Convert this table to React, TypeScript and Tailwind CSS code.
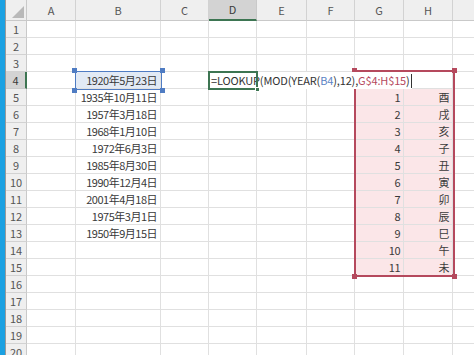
const COL_WIDTHS = [49, 85, 48, 48, 50, 48, 49, 49, 40];
const LETTERS = ["A", "B", "C", "D", "E", "F", "G", "H", "I"];
const ROW_COUNT = 20;

const dates: Record<number, string> = {
  4: "1920年5月23日",
  5: "1935年10月11日",
  6: "1957年3月18日",
  7: "1968年1月10日",
  8: "1972年6月3日",
  9: "1985年8月30日",
  10: "1990年12月4日",
  11: "2001年4月18日",
  12: "1975年3月1日",
  13: "1950年9月15日",
};

const zodiac = ["酉", "戌", "亥", "子", "丑", "寅", "卯", "辰", "巳", "午", "未"];

const font = { fontFamily: '"Noto Sans CJK JP", "Noto Sans", sans-serif' };

function Corner() {
  return (
    <div className="flex items-end justify-end border-r border-b border-[#c9c9c9] bg-[#efefef] p-[2px]">
      <svg width="12" height="12" viewBox="0 0 12 12">
        <polygon points="12,0 12,12 0,12" fill="#b9b9b9" />
      </svg>
    </div>
  );
}

function ColHeader({ letter }: { letter: string }) {
  const active = letter === "D";
  return (
    <div
      className={
        active
          ? "flex items-center justify-center border-r border-[#c9c9c9] border-b-2 border-b-[#3d7552] bg-[#d3d3d3] text-[11px] text-[#3a3a3a]"
          : "flex items-center justify-center border-r border-b border-[#d2d2d2] border-b-[#c9c9c9] bg-[#efefef] text-[11px] text-[#555]"
      }
    >
      {letter === "I" ? "" : letter}
    </div>
  );
}

function RowHeader({ row }: { row: number }) {
  const active = row === 4;
  return (
    <div
      className={
        active
          ? "flex items-center justify-center border-b border-[#c9c9c9] border-r-2 border-r-[#3d7552] bg-[#d3d3d3] text-[11px] text-[#3a3a3a]"
          : "flex items-center justify-center border-r border-b border-[#d2d2d2] border-r-[#c9c9c9] bg-[#efefef] text-[11px] text-[#555]"
      }
    >
      {row}
    </div>
  );
}

function Cell({ row, col }: { row: number; col: number }) {
  const inTable = (col === 6 || col === 7) && row >= 5 && row <= 15;
  let content: string | number = "";
  if (col === 1 && dates[row]) content = dates[row];
  if (col === 6 && inTable) content = row - 4;
  if (col === 7 && inTable) content = zodiac[row - 5];
  return (
    <div
      className={
        (inTable ? "bg-[#fbe6e8] " : row === 4 && col === 1 ? "bg-[#e2eaf5] " : "bg-white ") +
        "flex items-center justify-end overflow-hidden whitespace-nowrap border-r border-b border-[#e0e0e0] pr-[3px] text-[11px] leading-none tracking-[-0.5px] text-[#3a3a3a]"
      }
    >
      {content}
    </div>
  );
}

// range-finder box with square handles on its corners
function RangeBox({ className, handle }: { className: string; handle: string }) {
  return (
    <div className={"absolute " + className}>
      <div className={"absolute -left-[4px] -top-[4px] h-[5px] w-[5px] " + handle} />
      <div className={"absolute -right-[4px] -top-[4px] h-[5px] w-[5px] " + handle} />
      <div className={"absolute -left-[4px] -bottom-[4px] h-[5px] w-[5px] " + handle} />
      <div className={"absolute -right-[4px] -bottom-[4px] h-[5px] w-[5px] " + handle} />
    </div>
  );
}

export default function App() {
  return (
    <div className="flex h-[355px] w-[474px] overflow-hidden bg-white" style={font}>
      <div className="w-[5px] shrink-0 bg-[#1ba1e2]" />
      <div className="w-px shrink-0 bg-[#9a9a9a]" />
      <div className="relative">
        <div className="grid grid-cols-[21px_49px_85px_48px_48px_50px_48px_49px_49px_40px] grid-rows-[21px_repeat(20,17px)]">
          <Corner />
          {LETTERS.map((l) => (
            <ColHeader key={l} letter={l} />
          ))}
          {Array.from({ length: ROW_COUNT }, (_, i) => i + 1).map((row) => [
            <RowHeader key={`h${row}`} row={row} />,
            ...COL_WIDTHS.map((_, col) => <Cell key={`${row}-${col}`} row={row} col={col} />),
          ])}
        </div>

        {/* B4 */}
        <RangeBox className="left-[69px] top-[71px] h-[19px] w-[87px] border border-[#4f7cc3]" handle="bg-[#4f7cc3]" />

        {/* G4:H15 */}
        <RangeBox className="left-[348px] top-[70px] h-[207px] w-[101px] border-2 border-[#b5495d]" handle="bg-[#b5495d]" />

        {/* in-cell editor over D4 */}
        <div className="absolute left-[204px] top-[72px] flex h-[17px] w-[202px] items-center bg-white pl-[1px] text-[11px] leading-none tracking-[-0.15px] whitespace-nowrap text-[#333]">
          <span>=LOOKUP(MOD(YEAR(</span>
          <span className="text-[#5b83c4]">B4</span>
          <span>),12),</span>
          <span className="text-[#b5495d]">G$4:H$15</span>
          <span>)</span>
          <span className="ml-[1px] h-[14px] w-px bg-[#333]" />
        </div>
        <div className="absolute left-[202px] top-[71px] h-[19px] w-[50px] border-2 border-[#3d7552]">
          <div className="absolute -right-[4px] -bottom-[4px] h-[5px] w-[5px] border border-white bg-[#3d7552]" />
        </div>
      </div>
    </div>
  );
}
